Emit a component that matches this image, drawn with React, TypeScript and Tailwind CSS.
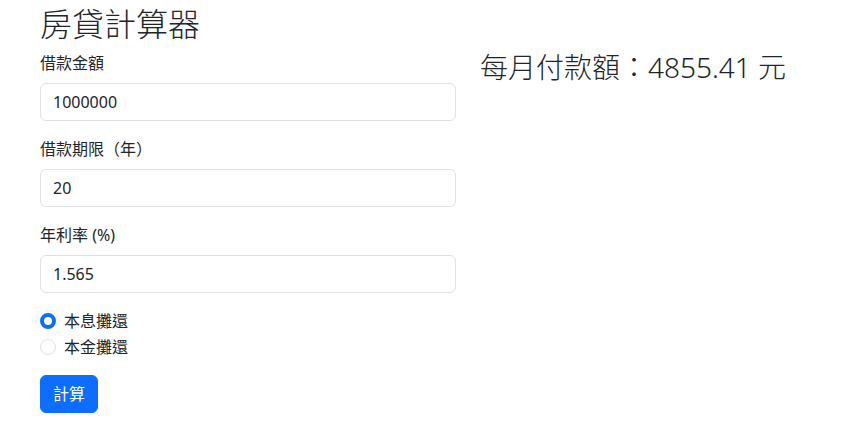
import { useState } from 'react';

const font = { fontFamily: '"Noto Sans", "Noto Sans CJK TC", sans-serif' };

function calcPayment(amount: string, years: string, rate: string, mode: string) {
  const p = parseFloat(amount);
  const n = parseFloat(years) * 12;
  const r = parseFloat(rate) / 100 / 12;
  if (!p || !n || isNaN(r)) return null;
  if (mode === 'principal') {
    // first month payment for equal principal
    return p / n + p * r;
  }
  if (r === 0) return p / n;
  const a = Math.pow(1 + r, n);
  return (p * r * a) / (a - 1);
}

function Field({ label, value, onChange }: { label: string; value: string; onChange: (v: string) => void }) {
  return (
    <div className="mb-4">
      <label className="mb-2 block text-base leading-6 text-[#212529]">{label}</label>
      <input
        type="text"
        value={value}
        onChange={(e) => onChange(e.target.value)}
        className="block h-[38px] w-full rounded-md border border-[#dee2e6] bg-white px-3 py-1.5 text-base leading-6 text-[#212529] outline-none focus:border-[#86b7fe] focus:shadow-[0_0_0_4px_rgba(13,110,253,0.25)]"
      />
    </div>
  );
}

export default function App() {
  const [amount, setAmount] = useState('1000000');
  const [years, setYears] = useState('20');
  const [rate, setRate] = useState('1.565');
  const [mode, setMode] = useState('equal');
  const [result, setResult] = useState<number | null>(() => calcPayment('1000000', '20', '1.565', 'equal'));

  return (
    <div className="min-h-screen bg-white pl-10 pt-[5px] text-[#212529]" style={font}>
      <h2 className="mb-2 text-[32px] font-light leading-[1.2]">房貸計算器</h2>
      <div className="flex gap-6">
        <div className="w-[416px] shrink-0">
          <Field label="借款金額" value={amount} onChange={setAmount} />
          <Field label="借款期限（年）" value={years} onChange={setYears} />
          <Field label="年利率 (%)" value={rate} onChange={setRate} />

          <div className="mb-4">
            {[
              { id: 'equal', text: '本息攤還' },
              { id: 'principal', text: '本金攤還' },
            ].map((o) => (
              <label key={o.id} className="mb-0.5 flex h-6 items-center gap-2 text-base leading-6">
                <input
                  type="radio"
                  name="mode"
                  checked={mode === o.id}
                  onChange={() => setMode(o.id)}
                  className="size-4 shrink-0 appearance-none rounded-full border border-[#dee2e6] bg-white checked:border-4 checked:border-[#0d6efd]"
                />
                <span>{o.text}</span>
              </label>
            ))}
          </div>

          <button
            type="button"
            onClick={() => setResult(calcPayment(amount, years, rate, mode))}
            className="h-[38px] rounded-md border border-[#0d6efd] bg-[#0d6efd] px-3 text-base leading-6 text-white hover:bg-[#0b5ed7]"
          >
            計算
          </button>
        </div>

        <div>
          {result !== null && (
            <h3 className="text-[28px] font-light leading-[1.2]">每月付款額：{result.toFixed(2)} 元</h3>
          )}
        </div>
      </div>
    </div>
  );
}
